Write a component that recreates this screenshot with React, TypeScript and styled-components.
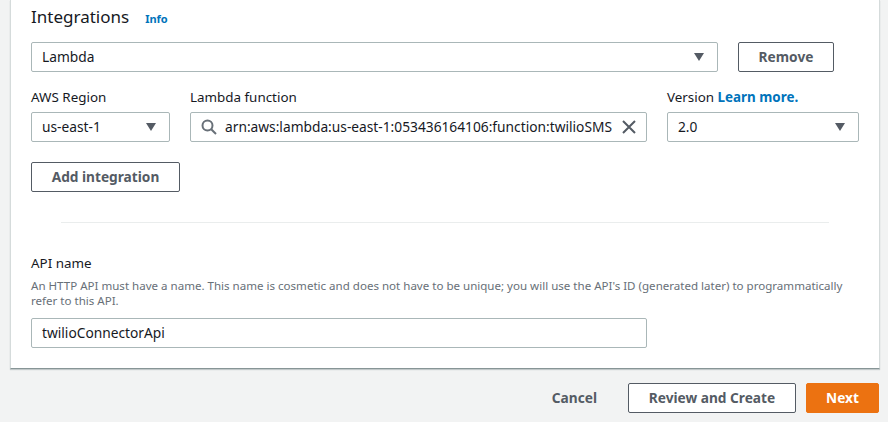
import React from 'react';
import styled, { createGlobalStyle } from 'styled-components';

const GlobalStyle = createGlobalStyle`
  html, body {
    margin: 0;
    padding: 0;
    background: #f2f3f3;
  }
  * {
    box-sizing: border-box;
  }
`;

const Page = styled.div`
  width: 888px;
  height: 422px;
  overflow: hidden;
  padding: 0 8px 0 10px;
  font-family: "Noto Sans", "Open Sans", sans-serif;
  font-size: 13.75px;
  line-height: 20px;
  color: #16191f;
`;

const Panel = styled.section`
  height: 369px;
  background: #fff;
  border-left: 1px solid #d5dbdb;
  border-right: 1px solid #d5dbdb;
  border-bottom: 1px solid #879596;
  box-shadow: 0 1px 1px rgba(0, 28, 36, 0.2);
  padding: 4px 20px 0;
`;

const TitleRow = styled.div`
  display: flex;
  align-items: baseline;
  gap: 16px;
  height: 25px;
`;

const Title = styled.h2`
  margin: 0;
  font-size: 17px;
  line-height: 25px;
  font-weight: 400;
`;

const InfoLink = styled.a`
  font-size: 11px;
  font-weight: 700;
  color: #0073bb;
`;

const TopRow = styled.div`
  display: flex;
  gap: 20px;
  margin-top: 13px;
`;

const Box = styled.div<{ $width: number }>`
  display: flex;
  align-items: center;
  width: ${(p) => p.$width}px;
  height: 30px;
  padding: 0 13px 0 10px;
  background: #fff;
  border: 1px solid #aab7b8;
  border-radius: 2px;
`;

const BoxText = styled.span`
  flex: 1;
  white-space: nowrap;
`;

const Button = styled.button<{ $width: number }>`
  width: ${(p) => p.$width}px;
  height: 30px;
  padding: 0;
  background: #fff;
  border: 1px solid #545b64;
  border-radius: 2px;
  color: #545b64;
  font-family: inherit;
  font-size: 13.7px;
  line-height: 20px;
  font-weight: 700;
`;

const FieldRow = styled.div`
  display: flex;
  gap: 20px;
  margin-top: 15px;
`;

const Field = styled.div`
  display: flex;
  flex-direction: column;
  gap: 5px;
`;

const Label = styled.label`
  display: block;
  font-size: 13.4px;
  line-height: 20px;
  white-space: nowrap;
`;

const LabelLink = styled.a`
  font-weight: 700;
  color: #0073bb;
`;

const SearchIcon = styled.svg`
  flex: none;
  margin-right: 8px;
`;

const ClearIcon = styled.svg`
  flex: none;
  margin-right: -3px;
`;

const AddButtonRow = styled.div`
  margin-top: 20px;
`;

const Divider = styled.hr`
  margin: 30px 30px 0;
  border: 0;
  border-top: 1px solid #eaeded;
  height: 0;
`;

const NameField = styled.div`
  margin-top: 30px;
`;

const Description = styled.p`
  width: 820px;
  margin: 5px 0 10px;
  font-size: 11.56px;
  line-height: 15px;
  color: #687078;
`;

const Footer = styled.footer`
  display: flex;
  justify-content: flex-end;
  align-items: center;
  gap: 10px;
  margin: 14px 1px 0 0;
`;

const CancelButton = styled.button`
  margin-right: 21px;
  padding: 0;
  background: none;
  border: 0;
  color: #545b64;
  font-family: inherit;
  font-size: 13.7px;
  line-height: 20px;
  font-weight: 700;
`;

const PrimaryButton = styled(Button)`
  background: #ec7211;
  border-color: #ec7211;
  color: #fff;
`;

const Caret = () => (
  <svg width="10" height="8" viewBox="0 0 10 8" aria-hidden="true">
    <path d="M0 0h10L5 8z" fill="#545b64" />
  </svg>
);

const App: React.FC = () => (
  <Page>
    <GlobalStyle />
    <Panel>
      <TitleRow>
        <Title>Integrations</Title>
        <InfoLink>Info</InfoLink>
      </TitleRow>
      <TopRow>
        <Box $width={687}>
          <BoxText>Lambda</BoxText>
          <Caret />
        </Box>
        <Button $width={96}>Remove</Button>
      </TopRow>
      <FieldRow>
        <Field>
          <Label>AWS Region</Label>
          <Box $width={139}>
            <BoxText>us-east-1</BoxText>
            <Caret />
          </Box>
        </Field>
        <Field>
          <Label>Lambda function</Label>
          <Box $width={457}>
            <SearchIcon width="16" height="16" viewBox="0 0 16 16" aria-hidden="true">
              <circle cx="6.5" cy="6.5" r="5" fill="none" stroke="#687078" strokeWidth="2" />
              <path d="M10.2 10.2L15 15" stroke="#687078" strokeWidth="2" />
            </SearchIcon>
            <BoxText>arn:aws:lambda:us-east-1:053436164106:function:twilioSMS</BoxText>
            <ClearIcon width="14" height="14" viewBox="0 0 14 14" aria-hidden="true">
              <path d="M1 1l12 12M13 1L1 13" stroke="#545b64" strokeWidth="2" />
            </ClearIcon>
          </Box>
        </Field>
        <Field>
          <Label>
            Version <LabelLink>Learn more.</LabelLink>
          </Label>
          <Box $width={192}>
            <BoxText>2.0</BoxText>
            <Caret />
          </Box>
        </Field>
      </FieldRow>
      <AddButtonRow>
        <Button $width={149}>Add integration</Button>
      </AddButtonRow>
      <Divider />
      <NameField>
        <Label>API name</Label>
        <Description>
          An HTTP API must have a name. This name is cosmetic and does not have to be unique; you
          will use the API's ID (generated later) to programmatically refer to this API.
        </Description>
        <Box $width={616}>
          <BoxText>twilioConnectorApi</BoxText>
        </Box>
      </NameField>
    </Panel>
    <Footer>
      <CancelButton>Cancel</CancelButton>
      <Button $width={168}>Review and Create</Button>
      <PrimaryButton $width={73}>Next</PrimaryButton>
    </Footer>
  </Page>
);

export default App;
